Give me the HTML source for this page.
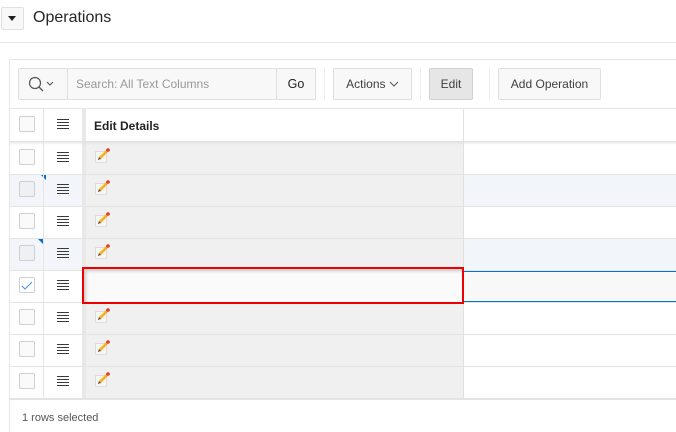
<!DOCTYPE html>
<html><head><style>
*{box-sizing:border-box;margin:0;padding:0}
body{width:676px;height:432px;overflow:hidden;background:#fff;font-family:"Liberation Sans",sans-serif;position:relative;color:#262626}
.a{position:absolute}
.btn{position:absolute;border:1px solid #dfdfdf;background:#f8f8f8;border-radius:2px;font-size:12px;color:#404040;display:flex;align-items:center;justify-content:center}
.cb{position:absolute;left:19px;width:16px;height:16px;border:1px solid #d0d0d0;border-radius:2px;background:#fafafa}
.hb{position:absolute;left:56px;width:14px;height:12px}
.pen{position:absolute;left:95px;width:16px;height:16px}
</style></head><body>
<div class="a" style="left:1px;top:7px;width:23px;height:23px;border:1px solid #e0e0e0;border-radius:2px;background:#f8f8f8"></div>
<div class="a" style="left:8px;top:16px;width:0;height:0;border-left:4px solid transparent;border-right:4px solid transparent;border-top:5px solid #222"></div>
<div class="a" style="left:33px;top:9px;font-size:16px;color:#262626">Operations</div>
<div class="a" style="left:0;top:42px;width:676px;height:1px;background:#e6e6e6"></div>

<div class="a" style="left:9px;top:59px;width:667px;height:373px;border:1px solid #e6e6e6;border-right:none;border-bottom:none"></div>
<div class="btn" style="left:18px;top:68px;width:50px;height:32px;justify-content:flex-start;padding-left:9px">
<svg width="28" height="18" viewBox="0 0 28 18"><circle cx="7" cy="8" r="5.5" fill="none" stroke="#555" stroke-width="1.2"/><path d="M11 12l4 4" stroke="#555" stroke-width="1.3"/><path d="M19 7l3 3 3-3" fill="none" stroke="#555" stroke-width="1"/></svg></div>
<div class="btn" style="left:67px;top:68px;width:210px;height:32px;justify-content:flex-start;padding-left:8px;color:#999">Search: All Text Columns</div>
<div class="btn" style="left:276px;top:68px;width:40px;height:32px;color:#222;font-size:12.5px">Go</div>
<div class="a" style="left:324px;top:68px;width:1px;height:32px;background:#eee"></div>
<div class="btn" style="left:333px;top:68px;width:79px;height:32px">Actions&nbsp;<svg width="10" height="7"><path d="M1 1l4 4 4-4" fill="none" stroke="#555"/></svg></div>
<div class="a" style="left:420px;top:68px;width:1px;height:32px;background:#eee"></div>
<div class="btn" style="left:429px;top:68px;width:44px;height:32px;background:#e6e6e6;border-color:#d0d0d0">Edit</div>
<div class="a" style="left:489px;top:68px;width:1px;height:32px;background:#eee"></div>
<div class="btn" style="left:498px;top:68px;width:103px;height:32px">Add Operation</div>
<div class="a" style="left:10px;top:108px;width:666px;height:1px;background:#e6e6e6"></div>

<div class="a" style="left:82px;top:141px;width:381px;height:257px;background:#f0f0f0"></div>
<div class="a" style="left:82px;top:108px;width:4px;height:290px;background:#e8e8e8"></div>
<div class="a" style="left:10px;top:174px;width:72px;height:32px;background:#f2f6fa"></div>
<div class="a" style="left:464px;top:174px;width:212px;height:32px;background:#f2f6fa"></div>
<div class="a" style="left:10px;top:238px;width:72px;height:32px;background:#f2f6fa"></div>
<div class="a" style="left:464px;top:238px;width:212px;height:32px;background:#f2f6fa"></div>
<div class="a" style="left:40px;top:174px;border-left:6px solid transparent;border-top:6px solid #0572ce"></div>
<div class="a" style="left:37px;top:238px;border-left:6px solid transparent;border-top:6px solid #0572ce"></div>

<div class="a" style="left:43px;top:108px;width:1px;height:290px;background:#e6e6e6"></div>
<div class="a" style="left:463px;top:108px;width:1px;height:290px;background:#e0e0e0"></div>
<div class="a" style="left:94px;top:119px;font-size:12px;font-weight:bold;color:#222">Edit Details</div>
<div class="a" style="left:10px;top:141px;width:666px;height:4px;background:linear-gradient(#e0e0e0,rgba(255,255,255,0))"></div>

<div class="a" style="left:10px;top:174px;width:666px;height:1px;background:#e4e4e4"></div>
<div class="a" style="left:10px;top:206px;width:666px;height:1px;background:#e4e4e4"></div>
<div class="a" style="left:10px;top:238px;width:666px;height:1px;background:#e4e4e4"></div>
<div class="a" style="left:10px;top:270px;width:666px;height:1px;background:#e4e4e4"></div>
<div class="a" style="left:10px;top:302px;width:666px;height:1px;background:#e4e4e4"></div>
<div class="a" style="left:10px;top:334px;width:666px;height:1px;background:#e4e4e4"></div>
<div class="a" style="left:10px;top:366px;width:666px;height:1px;background:#e4e4e4"></div>
<div class="a" style="left:10px;top:398px;width:666px;height:2px;background:#e4e4e4"></div>
<div class="a" style="left:464px;top:271px;width:212px;height:31px;background:#f8f8f8;border-top:1px solid #0572ce;border-bottom:1px solid #0572ce"></div>

<svg class="a" width="0" height="0"><defs>
<symbol id="h" viewBox="0 0 14 12"><path d="M1 1.5h12M1 4.5h12M1 7.5h12M1 10.5h12" stroke="#3a3a3a" stroke-width="1"/></symbol>
<symbol id="p" viewBox="0 0 16 16"><rect x="0.5" y="4.5" width="11" height="11" fill="#f6f6f6" stroke="#ddd"/><path d="M3 13l1-3 8-8 2 2-8 8z" fill="#f5b324"/><path d="M3 13l1-3 2 2z" fill="#555"/><circle cx="13" cy="3" r="1.8" fill="#e53935"/></symbol></defs></svg>

<div class="cb" style="top:116px"></div><svg class="hb" style="top:118px"><use href="#h"/></svg>
<div class="cb" style="top:149px"></div><svg class="hb" style="top:151px"><use href="#h"/></svg>
<div class="cb" style="top:181px;background:#eef1f4"></div><svg class="hb" style="top:183px"><use href="#h"/></svg>
<div class="cb" style="top:213px"></div><svg class="hb" style="top:215px"><use href="#h"/></svg>
<div class="cb" style="top:245px;background:#eef1f4"></div><svg class="hb" style="top:247px"><use href="#h"/></svg>
<div class="cb" style="top:277px;background:#fff"><svg width="14" height="14" style="position:absolute;left:0;top:0"><path d="M2 8l3 3 7-7" fill="none" stroke="#4a90e2" stroke-width="1"/></svg></div><svg class="hb" style="top:279px"><use href="#h"/></svg>
<div class="cb" style="top:309px"></div><svg class="hb" style="top:311px"><use href="#h"/></svg>
<div class="cb" style="top:341px"></div><svg class="hb" style="top:343px"><use href="#h"/></svg>
<div class="cb" style="top:373px"></div><svg class="hb" style="top:375px"><use href="#h"/></svg>

<svg class="pen" style="top:147px"><use href="#p"/></svg>
<svg class="pen" style="top:179px"><use href="#p"/></svg>
<svg class="pen" style="top:211px"><use href="#p"/></svg>
<svg class="pen" style="top:243px"><use href="#p"/></svg>
<svg class="pen" style="top:307px"><use href="#p"/></svg>
<svg class="pen" style="top:339px"><use href="#p"/></svg>
<svg class="pen" style="top:371px"><use href="#p"/></svg>

<div class="a" style="left:82px;top:267px;width:382px;height:37px;border:2px solid #e00;background:#fafafa;box-shadow:inset 2px 2px 3px rgba(0,0,0,.2)"></div>

<div class="a" style="left:22px;top:412px;font-size:11px;color:#555">1 rows selected</div>
</body></html>
